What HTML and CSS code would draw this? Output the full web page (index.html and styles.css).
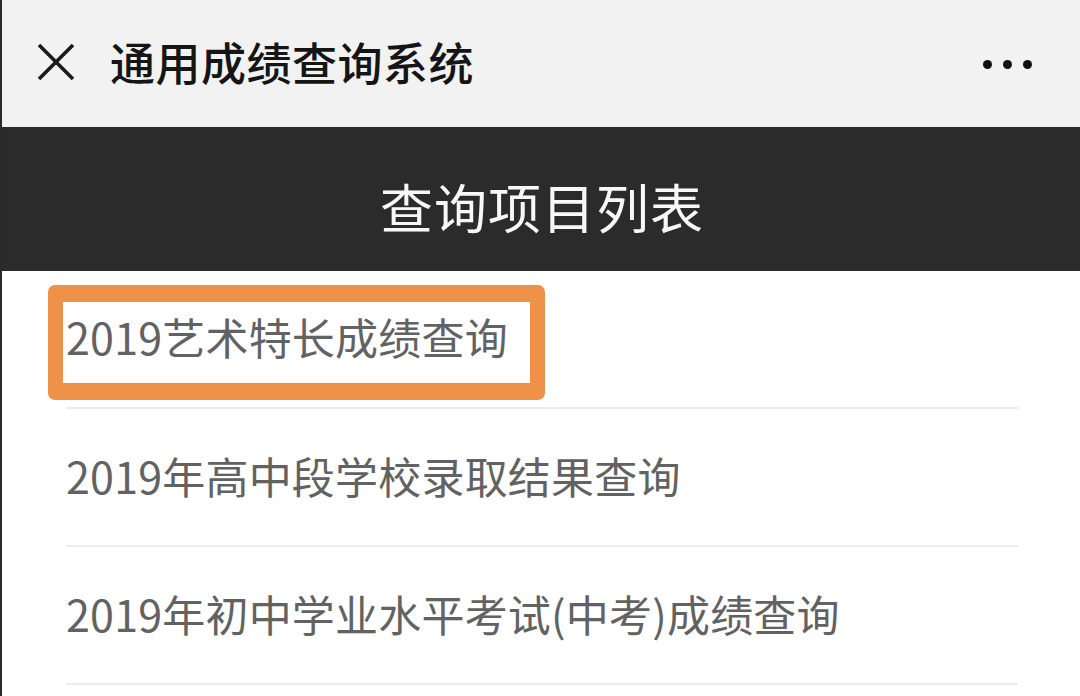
FILE: index.html
```html
<!DOCTYPE html>
<html lang="zh-CN">
<head>
<meta charset="utf-8">
<link rel="stylesheet" href="styles.css">
</head>
<body>
<div class="page">
  <div class="topbar">
    <svg class="close" width="38" height="38" viewBox="0 0 38 38"><path d="M2 2 L36 36 M36 2 L2 36" stroke="#1a1a1a" stroke-width="3.6" fill="none"/></svg>
    <div class="title">通用成绩查询系统</div>
    <div class="more"><span></span><span></span><span></span></div>
  </div>
  <div class="header">查询项目列表</div>
  <ul class="list">
    <li class="item highlighted"><span class="text">2019艺术特长成绩查询</span><div class="mark"></div></li>
    <li class="item"><span class="text">2019年高中段学校录取结果查询</span></li>
    <li class="item"><span class="text">2019年初中学业水平考试(中考)成绩查询</span></li>
  </ul>
</div>
</body>
</html>
```

FILE: styles.css
```css
html, body {
  margin: 0;
  padding: 0;
  background: #ffffff;
}
.page {
  width: 1080px;
  height: 696px;
  overflow: hidden;
  box-sizing: border-box;
  border-left: 2px solid #2a2a2a;
  font-family: "Noto Sans CJK SC", "Noto Sans", sans-serif;
}
.topbar {
  height: 127px;
  background: #f2f2f2;
  display: flex;
  align-items: center;
  padding-left: 35px;
  padding-right: 48px;
  box-sizing: border-box;
}
.close {
  flex: none;
  margin-top: -3px;
}
.title {
  margin-left: 35px;
  font-size: 45px;
  font-weight: 500;
  color: #151515;
  letter-spacing: 0.5px;
  margin-top: -4px;
}
.more {
  margin-left: auto;
  display: flex;
  gap: 11px;
  margin-top: 1px;
}
.more span {
  width: 9px;
  height: 9px;
  border-radius: 50%;
  background: #111;
}
.header {
  height: 144px;
  box-sizing: border-box;
  padding-top: 14px;
  background: #2b2b2b;
  color: #f7f7f7;
  font-size: 53px;
  display: flex;
  align-items: center;
  justify-content: center;
  letter-spacing: 1px;
  padding-left: 2px;
}
.list {
  list-style: none;
  margin: 0;
  padding: 0 62px 0 64px;
}
.item {
  position: relative;
  height: 138px;
  border-bottom: 2px solid #ececec;
  display: flex;
  align-items: center;
  box-sizing: border-box;
}
.item .text {
  font-size: 43px;
  color: #626262;
  margin-top: -4px;
  letter-spacing: 0.2px;
}
.highlighted .text {
  margin-top: -6px;
}
.mark {
  position: absolute;
  left: -18px;
  top: 14px;
  width: 497px;
  height: 115px;
  box-sizing: border-box;
  border: 15px solid #ef9148;
  border-top-width: 17px;
  border-bottom-width: 17px;
  border-radius: 7px;
}
```
